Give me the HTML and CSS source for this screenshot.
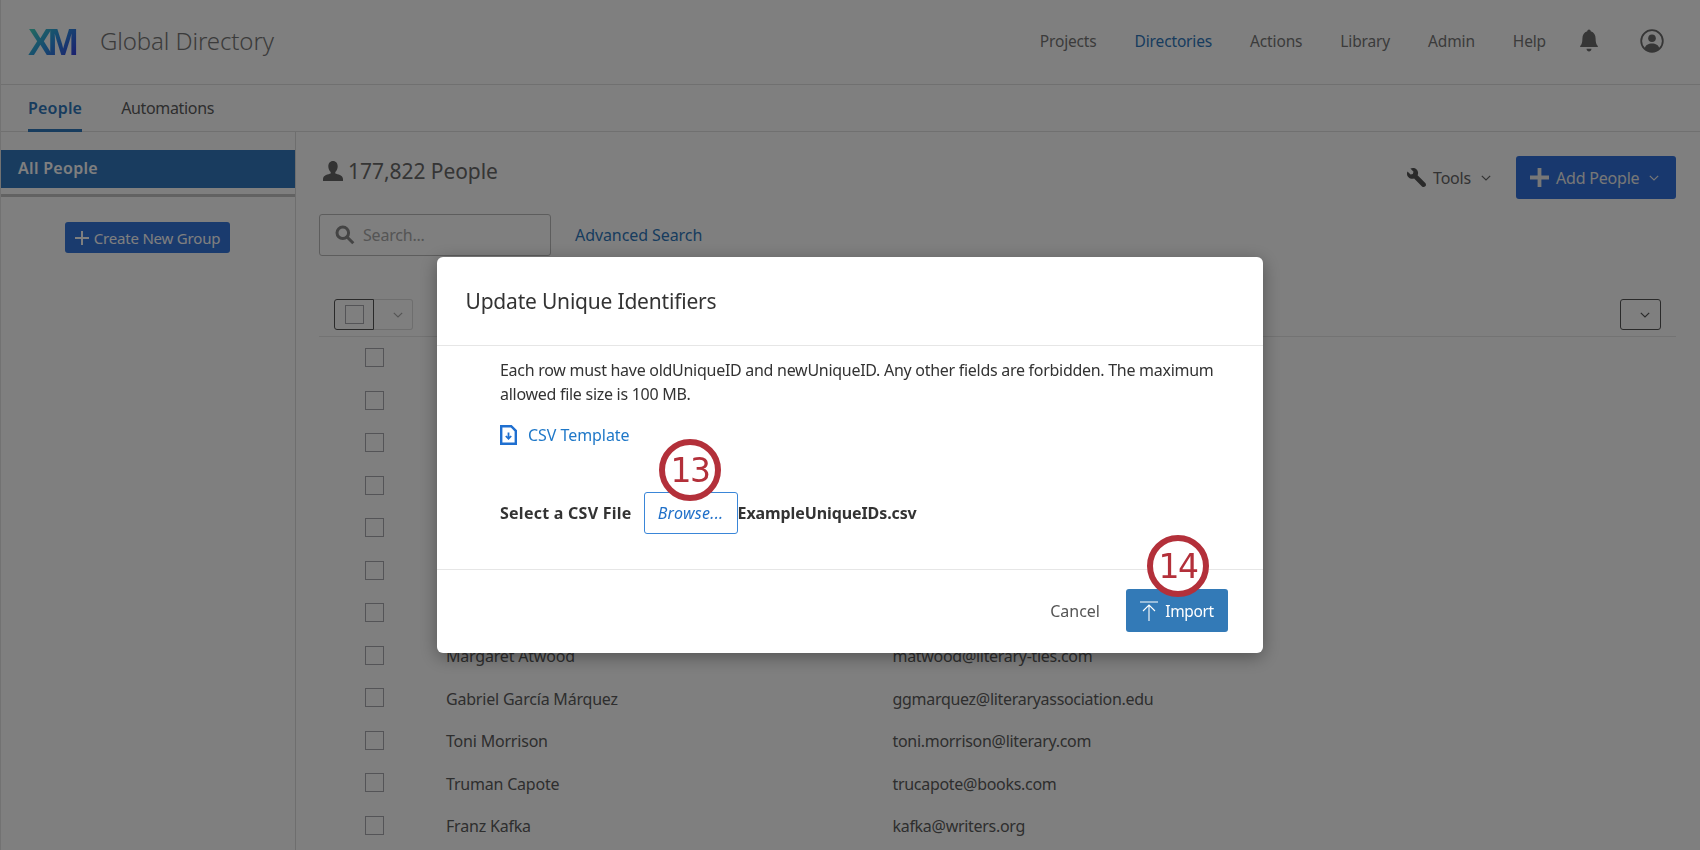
FILE: index.html
```html
<!DOCTYPE html>
<html lang="en">
<head>
<meta charset="utf-8">
<title>Global Directory</title>
<link rel="stylesheet" href="styles.css">
</head>
<body>
<div class="page">
  <header class="topbar">
    <span class="logo">XM</span>
    <span class="product">Global Directory</span>
    <nav class="nav">
      <a>Projects</a>
      <a class="current">Directories</a>
      <a>Actions</a>
      <a>Library</a>
      <a>Admin</a>
      <a>Help</a>
    </nav>
    <svg class="bell" viewBox="0 0 18 24"><path d="M9 0.5c1 0 1.6.8 1.7 1.8C14 3.2 15.6 6 15.6 9.5c0 3.6.6 6 2.2 7.6.3.4.2 1-.4 1H.6c-.6 0-.7-.6-.4-1C1.800 15.500 2.400 13.100 2.400 9.500 2.400 6 4 3.200 7.300 2.300 7.400 1.300 8 .5 9 .5z"/><path d="M6.500 19.800h5C11.300 21.500 10.300 22.500 9 22.500s-2.300-1-2.500-2.700z"/></svg>
    <svg class="account" viewBox="0 0 24 24"><circle cx="12" cy="12" r="10.800" class="ring"/><circle cx="12" cy="9.300" r="3.800"/><path d="M4.600 19.500C5.500 16 8.300 14.600 12 14.600s6.500 1.400 7.400 4.900C17.500 21.700 15 22.800 12 22.800s-5.500-1.100-7.400-3.300z"/></svg>
  </header>
  <div class="tabs">
    <a class="tab active">People</a>
    <a class="tab tab-plain">Automations</a>
  </div>
  <div class="content">
    <aside class="sidebar">
      <div class="group-item">All People</div>
      <div class="group-rule"></div>
      <button class="create-btn"><svg class="create-plus" viewBox="0 0 14 14"><path d="M7 0v14M0 7h14"/></svg>Create New Group</button>
    </aside>
    <main class="main">
      <div class="title-row">
        <div class="count">
          <svg class="person" viewBox="0 0 20 20"><path d="M10 0c3 0 4.700 2.300 4.700 5.300 0 2.400-1 4.600-2.400 5.700v1.500c2.200.9 7.700 1.500 7.700 5.500v2H0v-2c0-4 5.500-4.600 7.700-5.500V11C6.300 9.900 5.300 7.700 5.300 5.300 5.300 2.300 7 0 10 0z"/></svg>
          <span>177,822 People</span>
        </div>
        <div class="actions">
          <button class="tools-btn">
            <svg class="wrench" viewBox="0 0 20 20"><path d="M1.500 3.500 4.600 6.600 6.800 5.900 7.500 3.700 4.400.6C6.500-.4 9-.1 10.600 1.500 12.200 3.100 12.500 5.400 11.600 7.300L19.300 15C20.200 15.900 20.200 17.400 19.300 18.300 18.400 19.300 16.900 19.300 16 18.400L8.100 10.500C6.200 11.200 4 10.800 2.500 9.300 .9 7.700.6 5.500 1.500 3.500z"/></svg>
            <span>Tools</span>
            <svg class="chev" viewBox="0 0 10 6"><path d="M.8.8 5 5 9.200.8"/></svg>
          </button>
          <button class="add-btn">
            <svg class="add-plus" viewBox="0 0 20 20"><path d="M10 0v20M0 10h20"/></svg>
            <span>Add People</span>
            <svg class="chev" viewBox="0 0 10 6"><path d="M.8.8 5 5 9.200.8"/></svg>
          </button>
        </div>
      </div>
      <div class="search-row">
        <div class="search">
          <svg class="search-icon" viewBox="0 0 20 20"><circle cx="7.800" cy="7.800" r="5.800"/><path d="m12.300 12.300 6 6"/></svg>
          <span>Search...</span>
        </div>
        <a class="adv">Advanced Search</a>
      </div>
      <div class="toolbar">
        <div class="select-all">
          <span class="select-box"><i class="check"></i></span>
          <span class="select-more"><svg class="chev" viewBox="0 0 10 6"><path d="M.8.8 5 5 9.200.8"/></svg></span>
        </div>
        <span class="col-btn"><svg class="chev" viewBox="0 0 10 6"><path d="M.8.8 5 5 9.200.8"/></svg></span>
      </div>
      <div class="rows">
        <div class="cell-check"><i class="check"></i></div><div></div><div></div>
        <div class="cell-check"><i class="check"></i></div><div></div><div></div>
        <div class="cell-check"><i class="check"></i></div><div></div><div></div>
        <div class="cell-check"><i class="check"></i></div><div></div><div></div>
        <div class="cell-check"><i class="check"></i></div><div></div><div></div>
        <div class="cell-check"><i class="check"></i></div><div></div><div></div>
        <div class="cell-check"><i class="check"></i></div><div></div><div></div>
        <div class="cell-check"><i class="check"></i></div><div class="cell-text">Margaret Atwood</div><div class="cell-text cell-email">matwood@literary-ties.com</div>
        <div class="cell-check"><i class="check"></i></div><div class="cell-text">Gabriel García Márquez</div><div class="cell-text cell-email">ggmarquez@literaryassociation.edu</div>
        <div class="cell-check"><i class="check"></i></div><div class="cell-text">Toni Morrison</div><div class="cell-text cell-email">toni.morrison@literary.com</div>
        <div class="cell-check"><i class="check"></i></div><div class="cell-text">Truman Capote</div><div class="cell-text cell-email">trucapote@books.com</div>
        <div class="cell-check"><i class="check"></i></div><div class="cell-text">Franz Kafka</div><div class="cell-text cell-email">kafka@writers.org</div>
      </div>
    </main>
  </div>
</div>
<div class="overlay">
  <section class="modal">
    <h1 class="modal-title">Update Unique Identifiers</h1>
    <div class="modal-body">
      <p class="intro">Each row must have oldUniqueID and newUniqueID. Any other fields are forbidden. The maximum allowed file size is 100 MB.</p>
      <a class="template">
        <svg class="doc" viewBox="0 0 17 20"><path class="doc-frame" d="M1.200 1.200h10L15.800 5.800V18.800H1.200z"/><path class="doc-arrow" d="M8.500 7.500v6M5.800 11l2.700 2.800L11.200 11"/></svg>
        <span>CSV Template</span>
      </a>
      <div class="file-row">
        <strong class="file-label">Select a CSV File</strong>
        <span class="browse">Browse...</span>
        <strong class="file-name">ExampleUniqueIDs.csv</strong>
      </div>
    </div>
    <footer class="modal-foot">
      <span class="cancel">Cancel</span>
      <button class="import">
        <svg class="import-icon" viewBox="0 0 18 20"><path d="M0 1h18M9 4v16M3 10l6-6 6 6"/></svg>
        <span>Import</span>
      </button>
    </footer>
    <span class="marker marker-13">13</span>
    <span class="marker marker-14">14</span>
  </section>
</div>
</body>
</html>
```

FILE: styles.css
```css
* { box-sizing: border-box; }
html, body { margin: 0; height: 850px; overflow: hidden; }
body { font-family: "Noto Sans", "Open Sans", sans-serif; font-size: 16px; letter-spacing: -0.2px; color: #5c5c5c; background: #fff; }
button { font: inherit; letter-spacing: inherit; border: 0; padding: 0; }
a { color: inherit; }
svg { display: block; flex: none; }

.page { height: 850px; border-left: 1px solid #e4e4e4; display: flex; flex-direction: column; overflow: hidden; }

.topbar { height: 85px; flex: none; display: flex; align-items: center; padding: 0 36px 2px 27px; border-bottom: 1px solid #e0e0e0; }
.logo { font-family: "Liberation Sans", sans-serif; font-weight: 700; font-size: 37px; line-height: 1; letter-spacing: -5px; width: 52px; margin: 2px -5px 0 0; background: linear-gradient(135deg, #4fe0b8 0%, #2c9ce0 42%, #3a2ce0 100%); -webkit-background-clip: text; background-clip: text; color: transparent; }
.product { font-size: 24px; font-weight: 300; letter-spacing: -0.1px; margin: 0 0 2px 25px; color: #777; }
.nav { margin-left: auto; display: flex; gap: 38px; font-size: 15.500px; letter-spacing: -0.15px; color: #777; }
.current { color: #2f78bd; }
.bell { width: 18px; height: 24px; margin-left: 34px; fill: #6c6c6c; }
.account { width: 24px; height: 24px; margin-left: 42px; fill: #6c6c6c; }
.ring { fill: none; stroke: #6c6c6c; stroke-width: 1.800; }

.tabs { height: 47px; flex: none; display: flex; gap: 39px; padding-left: 27px; border-bottom: 1px solid #e0e0e0; }
.tab { height: 47px; line-height: 47px; }
.tab-plain { letter-spacing: -0.35px; }
.active { color: #2f78bd; font-weight: 600; letter-spacing: 0.2px; border-bottom: 3px solid #2f78bd; }

.content { flex: 1; display: flex; min-height: 0; }
.sidebar { width: 295px; flex: none; border-right: 1px solid #dcdcdc; padding-top: 18px; display: flex; flex-direction: column; }
.group-item { height: 38px; line-height: 37px; padding-left: 17px; background: #3379bf; color: #fff; font-weight: 600; letter-spacing: 0.3px; }
.group-rule { height: 3px; margin-top: 6px; background: #c4c4c4; }
.create-btn { align-self: center; margin-top: 25px; height: 31px; width: 165px; margin-left: -1px; background: #3576dc; color: #fff; border-radius: 3px; font-size: 15px; display: flex; align-items: center; justify-content: center; gap: 5px; }
.create-plus { width: 14px; height: 14px; fill: none; stroke: #fff; stroke-width: 2; }

.main { flex: 1; min-width: 0; padding: 24px 24px 0 23px; }
.title-row { display: flex; justify-content: space-between; align-items: flex-start; height: 43px; }
.count { display: flex; align-items: center; gap: 5px; padding: 1px 0 0 4px; font-size: 21px; letter-spacing: -0.05px; color: #6a6a6a; }
.person { width: 20px; height: 20px; fill: #666; }
.actions { display: flex; align-items: center; gap: 25px; }
.tools-btn { background: none; color: #666; display: flex; align-items: center; height: 43px; }
.wrench { width: 20px; height: 20px; fill: #555; margin-right: 7px; }
.chev { width: 10px; height: 6px; fill: none; stroke: currentColor; stroke-width: 1.200; }
.tools-btn .chev { margin-left: 10px; }
.add-btn { width: 160px; height: 43px; background: #3070dc; color: #eee; border-radius: 3px; display: flex; align-items: center; padding-left: 14px; }
.add-plus { width: 19px; height: 19px; fill: none; stroke: #eee; stroke-width: 4; margin-right: 7px; }
.add-btn .chev { margin-left: 10px; }

.search-row { display: flex; align-items: center; margin-top: 15px; }
.search { width: 232px; height: 42px; border: 1px solid #bbb; border-radius: 3px; display: flex; align-items: center; padding-left: 15px; gap: 8px; color: #aaa; }
.search-icon { width: 20px; height: 20px; fill: none; stroke: #888; stroke-width: 3; }
.adv { margin-left: 24px; color: #2f78bd; letter-spacing: -0.08px; }

.toolbar { margin-top: 43px; height: 38px; padding: 0 15px 7px 15px; border-bottom: 1px solid #e6e6e6; display: flex; justify-content: space-between; }
.select-all { display: flex; height: 31px; }
.select-box { width: 40px; border: 1px solid #555; border-radius: 3px 0 0 3px; display: flex; align-items: center; justify-content: center; }
.select-more { width: 39px; border: 1px solid #ddd; border-left: 0; border-radius: 0 3px 3px 0; display: flex; align-items: center; justify-content: center; padding-left: 9px; color: #aaa; }
.col-btn { width: 41px; height: 31px; border: 1px solid #555; border-radius: 3px; display: flex; align-items: center; justify-content: center; padding-left: 9px; color: #555; }
.check { display: block; width: 19px; height: 19px; border: 1.500px solid #a8a8ae; }

.rows { display: grid; grid-template-columns: 127px 446.500px 1fr; grid-auto-rows: 42.500px; align-items: center; margin-top: -0.500px; color: #5c5c5c; }
.cell-check { padding-left: 46px; }
.cell-text { padding-top: 2px; }
.cell-email { letter-spacing: -0.3px; }

.overlay { position: fixed; inset: 0; background: rgba(0, 0, 0, .5); display: flex; justify-content: center; align-items: flex-start; padding-top: 257px; }
.modal { position: relative; width: 826px; height: 396px; background: #fff; border-radius: 6px; box-shadow: 0 4px 18px rgba(0, 0, 0, .35); display: flex; flex-direction: column; color: #333; }
.modal-title { margin: 0; height: 89px; flex: none; padding: 0 28.500px; border-bottom: 1px solid #e6e6e6; font-size: 21px; font-weight: 400; line-height: 88px; }
.modal-body { flex: 1; padding: 12px 30px 0 63px; }
.intro { margin: 0; line-height: 24px; letter-spacing: -0.28px; }
.template { display: flex; align-items: center; gap: 11px; margin-top: 18px; color: #1f78c8; letter-spacing: -0.05px; }
.doc { width: 17px; height: 20px; }
.doc-frame { fill: none; stroke: #1f6fd0; stroke-width: 2.400; }
.doc-arrow { fill: none; stroke: #1f6fd0; stroke-width: 1.800; }
.file-row { display: flex; align-items: center; margin-top: 46px; }
.file-label { margin-right: 12px; letter-spacing: 0.25px; }
.file-name { letter-spacing: -0.1px; }
.browse { width: 94px; height: 42px; border: 1px solid #3a86d8; border-radius: 3px; display: flex; align-items: center; justify-content: center; color: #1f6fc8; font-style: italic; letter-spacing: 0.3px; }
.modal-foot { height: 84px; flex: none; border-top: 1px solid #e6e6e6; display: flex; align-items: center; justify-content: flex-end; padding: 0 35px 2px 0; }
.cancel { color: #555; margin-right: 26px; letter-spacing: 0; }
.import { width: 102px; height: 43px; background: #337ab7; color: #fff; border-radius: 3px; display: flex; align-items: center; justify-content: center; gap: 7px; font-size: 15.500px; letter-spacing: -0.4px; }
.import-icon { width: 18px; height: 20px; fill: none; stroke: #fff; stroke-width: 1.100; }
.marker { position: absolute; width: 62px; height: 62px; border: 6px solid #b3303a; border-radius: 50%; background: #fff; color: #b3303a; font-family: "DejaVu Sans", sans-serif; font-size: 33px; letter-spacing: -1.500px; display: flex; align-items: center; justify-content: center; }
.marker-13 { left: 222px; top: 182px; }
.marker-14 { left: 710px; top: 278px; }
```
